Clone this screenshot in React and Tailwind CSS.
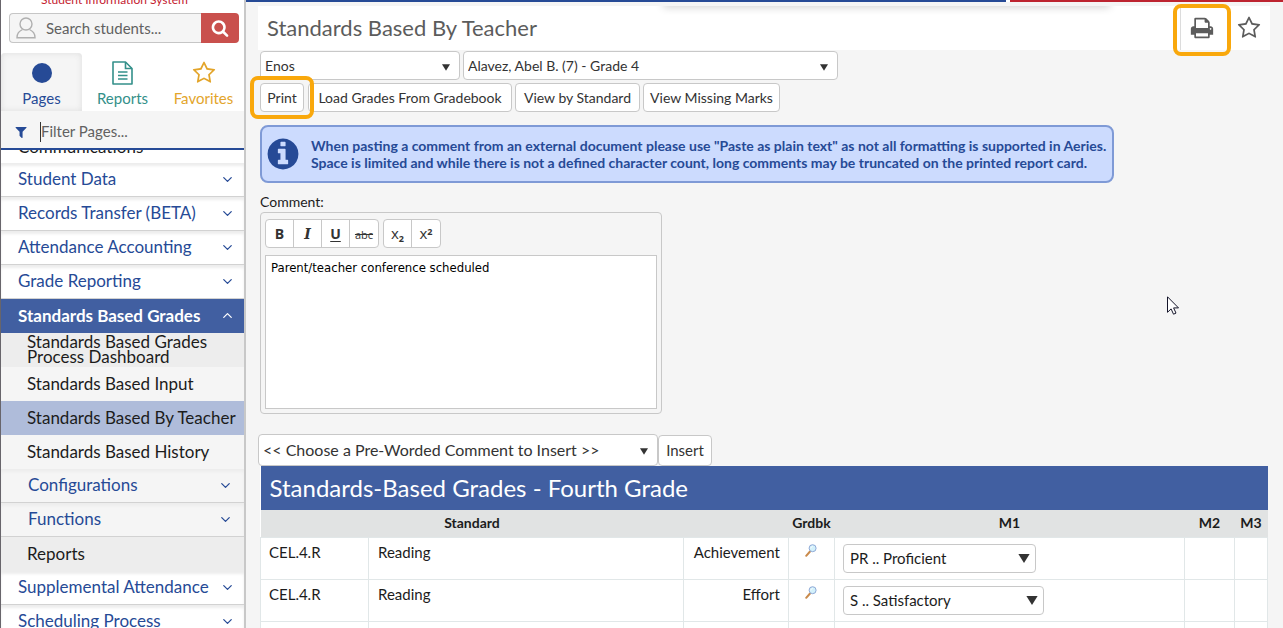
import clsx from 'clsx';
import { ChevronDown, ChevronUp } from 'lucide-react';

const ICONS = {
  search:
    'M1216 832q0-185-131.5-316.5t-316.5-131.5-316.5 131.5-131.5 316.5 131.5 316.5 316.5 131.5 316.5-131.5 131.5-316.5zm512 832q0 52-38 90t-90 38q-54 0-90-38l-343-342q-179 124-399 124-143 0-273.5-55.5t-225-150-150-225-55.5-273.5 55.5-273.5 150-225 225-150 273.5-55.5 273.5 55.5 225 150 150 225 55.5 273.5q0 220-124 399l343 343q37 37 37 90z',
  star: 'M1137 1004l306-297-422-62-189-382-189 382-422 62 306 297-73 421 378-199 377 199zM1664 647q0 22-26 48l-363 354 86 500q1 7 1 20 0 50-41 50-19 0-40-12l-449-236-449 236q-22 12-40 12-21 0-31.5-14.5t-10.5-35.5q0-6 2-20l86-500-364-354q-25-27-25-48 0-37 56-46l502-73 225-455q19-41 49-41t49 41l225 455 502 73q56 9 56 46z',
  filter:
    'M1595 295q17 41-14 70l-493 493v742q0 42-39 59-13 5-25 5-27 0-45-19l-256-256q-19-19-19-45v-486l-493-493q-31-29-14-70 17-39 59-39h1280q42 0 59 39z',
  print:
    'M384 1536h896v-256h-896v256zM384 896h896v-384h-160q-40 0-68-28t-28-68v-160h-640v640zM1536 960q0-26-19-45t-45-19-45 19-19 45 19 45 45 19 45-19 19-45zM1664 960v416q0 13-9.5 22.5t-22.5 9.5h-224v160q0 40-28 68t-68 28h-960q-40 0-68-28t-28-68v-160h-224q-13 0-22.5-9.5t-9.5-22.5v-416q0-79 56.5-135.5t135.5-56.5h64v-544q0-40 28-68t68-28h672q40 0 88 20t76 48l152 152q28 28 48 76t20 88v256h64q79 0 135.5 56.5t56.5 135.5z',
  info: 'M1152 1376v-160q0-14-9-23t-23-9h-96v-512q0-14-9-23t-23-9h-320q-14 0-23 9t-9 23v160q0 14 9 23t23 9h96v320h-96q-14 0-23 9t-9 23v160q0 14 9 23t23 9h448q14 0 23-9t9-23zm-128-896v-160q0-14-9-23t-23-9h-192q-14 0-23 9t-9 23v160q0 14 9 23t23 9h192q14 0 23-9t9-23zm640 416q0 209-103 385.5t-279.5 279.5-385.5 103-385.5-103-279.5-279.5-103-385.5 103-385.5 279.5-279.5 385.5-103 385.5 103 279.5 279.5 103 385.5z',
};

function Icon({ name, viewBox = '0 0 1792 1792', className }) {
  return (
    <svg viewBox={viewBox} fill="currentColor" className={className} aria-hidden="true">
      <path d={ICONS[name]} />
    </svg>
  );
}

function UserIcon() {
  return (
    <svg viewBox="0 0 20 22" fill="none" stroke="#b0b0b0" strokeWidth="1.4" className="h-[22px] w-5 shrink-0" aria-hidden="true">
      <circle cx="10" cy="7" r="6" />
      <path d="M6.5 12.5C3 14.5 1 16 1 20.8h18c0-4.8-2-6.3-5.5-8.3" />
    </svg>
  );
}

function ReportIcon() {
  return (
    <svg viewBox="0 0 21 24" fill="none" stroke="currentColor" strokeWidth="1.6" className="h-6 w-[21px]" aria-hidden="true">
      <path d="M1 1h12.5L20 7.5V23H1z" strokeLinejoin="round" />
      <path d="M13.5 1v6.5H20M6 11h9.5M6 14.500h9.5M6 18h9.5" />
    </svg>
  );
}

function MagnifierIcon() {
  return (
    <svg viewBox="0 0 12 13" className="mx-auto h-[13px] w-3" aria-hidden="true">
      <path d="M5 7.5 1.2 11.8" stroke="#c98a4b" strokeWidth="2" strokeLinecap="round" />
      <circle cx="7.6" cy="4.2" r="3.5" fill="#d3f1fb" stroke="#8fa9d6" />
      <path d="M5.8 4.4c0-1 .8-1.800 1.800-1.800" stroke="#fff" fill="none" />
    </svg>
  );
}

const NAV_TOP = ['Student Data', 'Records Transfer (BETA)', 'Attendance Accounting', 'Grade Reporting'];

function NavGroup({ label, nested }) {
  return (
    <button
      className={clsx(
        'flex h-[34px] w-full shrink-0 items-center justify-between pb-[3px] text-left text-[#264a96] shadow-[inset_0_-1px_#d2d2d2,inset_0_3px_3px_#ededed]',
        nested ? 'bg-[#f5f5f5] pr-[11px] pl-[27px]' : 'bg-white pr-[9px] pl-[17px]'
      )}
    >
      {label}
      <ChevronDown size={15} strokeWidth={2} className="mt-px" />
    </button>
  );
}

function NavPage({ label, className }) {
  return (
    <a
      href="#"
      className={clsx('flex h-[34px] shrink-0 items-center pb-0.5 pl-[26px] leading-[15px] text-[#1c1c1c]', className)}
    >
      {label}
    </a>
  );
}

function Sidebar() {
  return (
    <aside className="flex w-[246px] shrink-0 flex-col overflow-hidden border-r-2 border-l border-r-[#c8c8c8] border-l-[#68656b] bg-white">
      <div className="flex h-[13px] shrink-0 items-start justify-center overflow-hidden">
        <span className="-mt-2 pr-4 text-xs leading-4 whitespace-nowrap text-[#c4202f]">Student Information System</span>
      </div>
      <form className="mx-2 mr-[5px] flex h-[30px] shrink-0">
        <label className="flex min-w-0 flex-1 items-center gap-2.5 rounded-l border border-r-0 border-[#c6c6c6] bg-[#f5f5f5] pl-1.5">
          <UserIcon />
          <input
            aria-label="Search students"
            placeholder="Search students..."
            className="w-full min-w-0 bg-transparent text-[15px] outline-none placeholder:text-[#616161]"
          />
        </label>
        <button type="button" aria-label="Search" className="flex w-[38px] items-center justify-center rounded-r bg-[#c9504d] text-white">
          <Icon name="search" className="size-[18px]" />
        </button>
      </form>

      <nav className="mt-2.5 flex h-[58px] shrink-0 text-[15px]">
        <button className="flex w-[81px] flex-col items-center justify-end gap-0.5 rounded-t bg-[#f5f5f5] pb-0.5 text-[#264a96] shadow-[inset_0_0_6px_#dedede]">
          <span className="mb-0.5 size-5 rounded-full bg-[#264a96]" />
          Pages
        </button>
        <button className="flex w-[81px] flex-col items-center justify-end gap-0.5 pb-0.5 text-[#34908a]">
          <ReportIcon />
          Reports
        </button>
        <button className="flex flex-1 flex-col items-center justify-end gap-0.5 pb-0.5 text-[#e3a52b]">
          <Icon name="star" viewBox="0 0 1664 1792" className="size-6" />
          Favorites
        </button>
      </nav>

      <div className="flex h-[39px] shrink-0 items-center border-b-2 border-[#264a96] bg-[#f5f5f5] pt-1 pl-[13px] text-[#264a96]">
        <Icon name="filter" className="size-4" />
        <span className="ml-3 h-5 w-px bg-[#333]" />
        <input
          aria-label="Filter pages"
          placeholder="Filter Pages..."
          className="w-full min-w-0 bg-transparent text-[15px] outline-none placeholder:text-[#616161]"
        />
      </div>

      <div className="flex min-h-0 flex-1 flex-col overflow-hidden text-[17px]">
        <div className="flex h-[13px] shrink-0 items-end overflow-hidden pb-1 pl-[17px] text-[#1c1c1c]">
          Communications
        </div>
        {NAV_TOP.map((label) => (
          <NavGroup key={label} label={label} />
        ))}
        <button className="flex h-[34px] w-full shrink-0 items-center justify-between bg-[#415fa1] pr-[9px] pb-px pl-[17px] text-left font-bold text-white">
          Standards Based Grades
          <ChevronUp size={15} strokeWidth={2} />
        </button>
        <NavPage label="Standards Based Grades Process Dashboard" className="bg-[#ededed] pr-5" />
        <NavPage label="Standards Based Input" className="bg-[#f5f5f5]" />
        <NavPage label="Standards Based By Teacher" className="bg-[#afbcda] whitespace-nowrap" />
        <NavPage label="Standards Based History" className="bg-[#f5f5f5]" />
        <NavGroup label="Configurations" nested />
        <NavGroup label="Functions" nested />
        <NavPage label="Reports" className="bg-[#ededed]" />
        <NavGroup label="Supplemental Attendance" />
        <NavGroup label="Scheduling Process" />
      </div>
    </aside>
  );
}

function Select({ label, value, className, selectClass, big }) {
  return (
    <div className={clsx('relative', className)}>
      <select
        aria-label={label}
        className={clsx('size-full appearance-none rounded border border-[#c8c8c8] bg-white outline-none', selectClass)}
      >
        <option>{value}</option>
      </select>
      <svg
        viewBox="0 0 10 8"
        fill="#333"
        className={clsx('pointer-events-none absolute', big ? 'top-2.5 right-1.5 h-[9px] w-3' : 'top-1/2 right-2.5 -mt-0.5 h-[7px] w-2')}
        aria-hidden="true"
      >
        <path d="M0 0h10L5 8z" />
      </svg>
    </div>
  );
}

function Button({ children, className }) {
  return (
    <button className={clsx('rounded border border-[#c8c8c8] bg-white text-center whitespace-nowrap text-[#333]', className)}>
      {children}
    </button>
  );
}

function Highlight({ className }) {
  return <span className={clsx('pointer-events-none absolute rounded-lg border-4 border-[#f9a80c]', className)} />;
}

function PageHeader() {
  return (
    <header className="relative mt-1 flex h-11 items-center justify-between bg-white pl-[9px]">
      <div className="pointer-events-none absolute inset-x-0 top-0 h-4 overflow-hidden">
        <div className="absolute -top-2 right-[160px] left-[405px] h-2 shadow-[0_1px_9px_rgba(0,0,0,0.2)]" />
      </div>
      <h1 className="pb-0.5 text-[22px] text-[#5c5c5c]">Standards Based By Teacher</h1>
      <div className="flex h-full text-[#5c5c5c]">
        <button aria-label="Print page" className="relative flex w-[50px] items-center justify-center border-l border-[#dcdcdc] pr-2">
          <Icon name="print" viewBox="0 0 1664 1792" className="size-6" />
          <Highlight className="-top-0.5 -right-px h-[52px] w-[58px]" />
        </button>
        <button aria-label="Add to favorites" className="flex w-10 items-center justify-center pr-0.5">
          <Icon name="star" viewBox="0 0 1664 1792" className="size-6" />
        </button>
      </div>
    </header>
  );
}

const FORMAT_BUTTONS = [
  { name: 'Bold', text: 'B', style: 'font-bold text-sm' },
  { name: 'Italic', text: 'I', style: "font-bold italic text-sm font-['DejaVu_Serif']" },
  { name: 'Underline', text: 'U', style: 'font-bold underline underline-offset-2 text-sm' },
  { name: 'Strikethrough', text: 'abc', style: 'line-through text-[11px] pt-1' },
];

function CommentEditor() {
  return (
    <div className="mt-0.5 ml-0.5 w-[402px] rounded border border-[#c8c8c8] p-1 pt-1.5 text-[#333]">
      <div className="flex h-[29px] gap-1 font-['Open_Sans',sans-serif]">
        <div className="flex divide-x divide-[#c8c8c8] overflow-hidden rounded border border-[#c8c8c8] bg-white">
          {FORMAT_BUTTONS.map(({ name, text, style }) => (
            <button key={name} aria-label={name} className={clsx('w-7', style)}>
              {text}
            </button>
          ))}
        </div>
        <div className="flex divide-x divide-[#c8c8c8] overflow-hidden rounded border border-[#c8c8c8] bg-white text-[15px]">
          <button aria-label="Subscript" className="w-7">
            x<sub className="text-[9px] font-bold">2</sub>
          </button>
          <button aria-label="Superscript" className="w-7">
            x<sup className="text-[9px] font-bold">2</sup>
          </button>
        </div>
      </div>
      <textarea
        id="comment"
        defaultValue="Parent/teacher conference scheduled"
        className="mt-[7px] block h-[154px] w-full resize-none border border-[#c8c8c8] bg-white px-[5px] py-1 font-['DejaVu_Sans_Condensed','DejaVu_Sans',sans-serif] text-[13px] leading-4 text-black outline-none"
      />
    </div>
  );
}

const ROWS = [
  { code: 'CEL.4.R', standard: 'Reading', type: 'Achievement', mark: 'PR .. Proficient', width: 'w-[193px]' },
  { code: 'CEL.4.R', standard: 'Reading', type: 'Effort', mark: 'S .. Satisfactory', width: 'w-[201px]' },
];

function GradesTable() {
  return (
    <table className="w-full table-fixed border-collapse bg-white text-[15px] text-[#1c1c1c]">
      <colgroup>
        <col className="w-[108px]" />
        <col />
        <col className="w-[105px]" />
        <col className="w-[46px]" />
        <col className="w-[350px]" />
        <col className="w-[50px]" />
        <col className="w-[33px]" />
      </colgroup>
      <thead>
        <tr className="h-11 bg-[#415fa1] text-left text-2xl text-white">
          <th colSpan={7} className="pl-[9px] font-normal">
            Standards-Based Grades - Fourth Grade
          </th>
        </tr>
        <tr className="h-[27px] bg-[#e1e3e3] text-sm font-bold">
          <th colSpan={2}>Standard</th>
          <td />
          <th>Grdbk</th>
          <th>M1</th>
          <th>M2</th>
          <th>M3</th>
        </tr>
      </thead>
      <tbody className="[&_td]:border [&_td]:border-[#e1e7e8]">
        {ROWS.map((row) => (
          <tr key={row.type} className="h-[42px] align-top leading-5">
            <td className="pt-1 pl-2">{row.code}</td>
            <td className="pt-1 pl-[9px]">{row.standard}</td>
            <td className="pt-1 pr-2 text-right">{row.type}</td>
            <td className="pt-1.5">
              <MagnifierIcon />
            </td>
            <td className="pt-1.5 pl-2">
              <Select
                label={`${row.type} mark`}
                value={row.mark}
                className={clsx('h-[29px]', row.width)}
                selectClass="pl-1.5"
                big
              />
            </td>
            <td />
            <td />
          </tr>
        ))}
        <tr className="h-[42px]">
          <td />
          <td />
          <td />
          <td />
          <td />
          <td />
          <td />
        </tr>
      </tbody>
    </table>
  );
}

function Cursor() {
  return (
    <svg viewBox="0 0 12 19" className="pointer-events-none absolute top-[296px] left-[1167px] h-[19px] w-3" aria-hidden="true">
      <path d="M.5.8v15.5l3.6-3.4 2.4 5.3 2.5-1.1-2.4-5.200h4.9z" fill="#fff" stroke="#15152a" />
    </svg>
  );
}

function App() {
  return (
    <div className="relative flex h-screen overflow-hidden bg-[#f5f5f5] font-['Lato',sans-serif] text-[#1c1c1c]">
      <Sidebar />
      <main className="min-w-0 flex-1">
        <div className="flex h-0.5">
          <div className="flex-1 bg-[#264a96]" />
          <div className="w-1 bg-white" />
          <div className="w-[273px] bg-[#bd2430]" />
        </div>
        <div className="pr-[13px] pl-3">
          <PageHeader />

          <div className="mt-px ml-0.5 flex gap-[3px] text-sm">
            <Select label="Teacher" value="Enos" className="h-[29px] w-[200px]" selectClass="pl-1 text-[#333]" />
            <Select
              label="Student"
              value="Alavez, Abel B. (7) - Grade 4"
              className="h-[29px] w-[375px]"
              selectClass="pl-1 text-[#333]"
            />
          </div>
          <div className="mt-[3px] ml-0.5 flex h-[29px] gap-[3px] text-sm">
            <div className="relative flex pr-px">
              <Button className="w-11">Print</Button>
              <Highlight className="-top-[7px] -left-2.5 h-[43px] w-16" />
            </div>
            <Button className="w-[204px]">Load Grades From Gradebook</Button>
            <Button className="w-[125px]">View by Standard</Button>
            <Button className="w-[137px]">View Missing Marks</Button>
          </div>

          <div className="mt-[13px] ml-0.5 flex h-[58px] w-fit items-center gap-2.5 rounded-lg border-2 border-[#7f9ad6] bg-[#ccdbfe] pr-1.5 pl-[3px] text-[#264a96]">
            <Icon name="info" className="size-9 shrink-0" />
            <p className="text-sm leading-[17px] font-bold">
              When pasting a comment from an external document please use "Paste as plain text" as not all formatting is
              supported in Aeries.
              <br />
              Space is limited and while there is not a defined character count, long comments may be truncated on the
              printed report card.
            </p>
          </div>

          <label htmlFor="comment" className="mt-2.5 ml-0.5 block text-sm leading-[17px]">
            Comment:
          </label>
          <CommentEditor />

          <div className="mt-5 flex h-8 items-end">
            <Select
              label="Pre-worded comment"
              value="<< Choose a Pre-Worded Comment to Insert >>"
              className="h-8 w-[400px]"
              selectClass="pl-1 text-base text-[#333]"
            />
            <Button className="h-[31px] w-[54px] text-[15px]">Insert</Button>
          </div>
          <div className="mr-0.5 ml-0.5">
            <GradesTable />
          </div>
        </div>
      </main>
      <Cursor />
    </div>
  );
}

export default App;
